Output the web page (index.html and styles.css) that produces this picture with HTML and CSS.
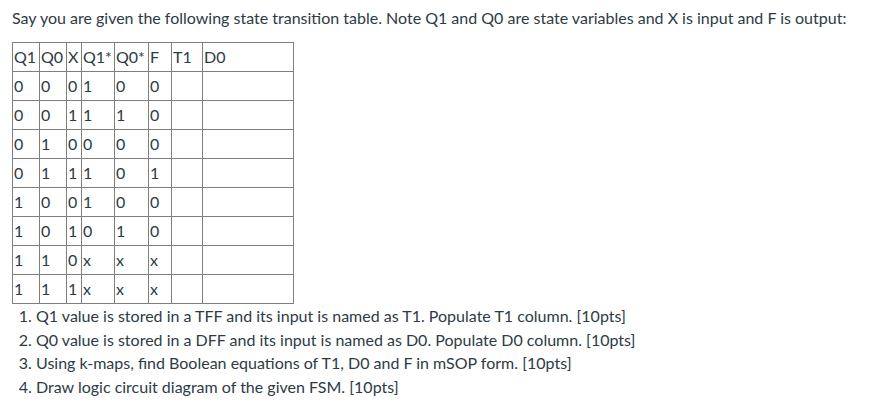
FILE: index.html
```html
<!DOCTYPE html>
<html>
<head>
<meta charset="utf-8">
<link rel="stylesheet" href="styles.css">
</head>
<body>
<p class="intro">Say you are given the following state transition table. Note Q1 and Q0 are state variables and X is input and F is output:</p>
<table class="stt">
<colgroup>
<col class="c1"><col class="c2"><col class="c3"><col class="c4"><col class="c5"><col class="c6"><col class="c7"><col class="c8">
</colgroup>
<tr><td>Q1</td><td>Q0</td><td>X</td><td>Q1*</td><td>Q0*</td><td>F</td><td>T1</td><td>D0</td></tr>
<tr><td>0</td><td>0</td><td>0</td><td>1</td><td>0</td><td>0</td><td></td><td></td></tr>
<tr><td>0</td><td>0</td><td>1</td><td>1</td><td>1</td><td>0</td><td></td><td></td></tr>
<tr><td>0</td><td>1</td><td>0</td><td>0</td><td>0</td><td>0</td><td></td><td></td></tr>
<tr><td>0</td><td>1</td><td>1</td><td>1</td><td>0</td><td>1</td><td></td><td></td></tr>
<tr><td>1</td><td>0</td><td>0</td><td>1</td><td>0</td><td>0</td><td></td><td></td></tr>
<tr><td>1</td><td>0</td><td>1</td><td>0</td><td>1</td><td>0</td><td></td><td></td></tr>
<tr><td>1</td><td>1</td><td>0</td><td>x</td><td>x</td><td>x</td><td></td><td></td></tr>
<tr><td>1</td><td>1</td><td>1</td><td>x</td><td>x</td><td>x</td><td></td><td></td></tr>
</table>
<ol class="tasks">
<li>Q1 value is stored in a TFF and its input is named as T1. Populate T1 column. [10pts]</li>
<li>Q0 value is stored in a DFF and its input is named as D0. Populate D0 column. [10pts]</li>
<li>Using k-maps, find Boolean equations of T1, D0 and F in mSOP form. [10pts]</li>
<li>Draw logic circuit diagram of the given FSM. [10pts]</li>
</ol>
</body>
</html>
```
FILE: styles.css
```css
html, body {
  background: #ffffff;
}
body {
  margin: 0;
  padding: 6px 12px;
  font-family: Lato, "Open Sans", sans-serif;
  color: #2d3b45;
  font-size: 16px;
}
.intro {
  margin: 0 0 12px;
  line-height: 24px;
}
.stt {
  border-collapse: collapse;
  table-layout: fixed;
  width: 282px;
}
.stt td {
  border: 1px solid #7f7f7f;
  padding: 0 1px;
  height: 28px;
  line-height: 20px;
  vertical-align: middle;
  white-space: nowrap;
  overflow: hidden;
}
.c1 { width: 27px; }
.c2 { width: 27px; }
.c3 { width: 15px; }
.c4 { width: 33px; }
.c5 { width: 34px; }
.c6 { width: 23px; }
.c7 { width: 31px; }
.c8 { width: 91px; }
.tasks {
  margin: 0;
  padding-left: 24px;
}
.tasks li {
  line-height: 23.5px;
}
```
